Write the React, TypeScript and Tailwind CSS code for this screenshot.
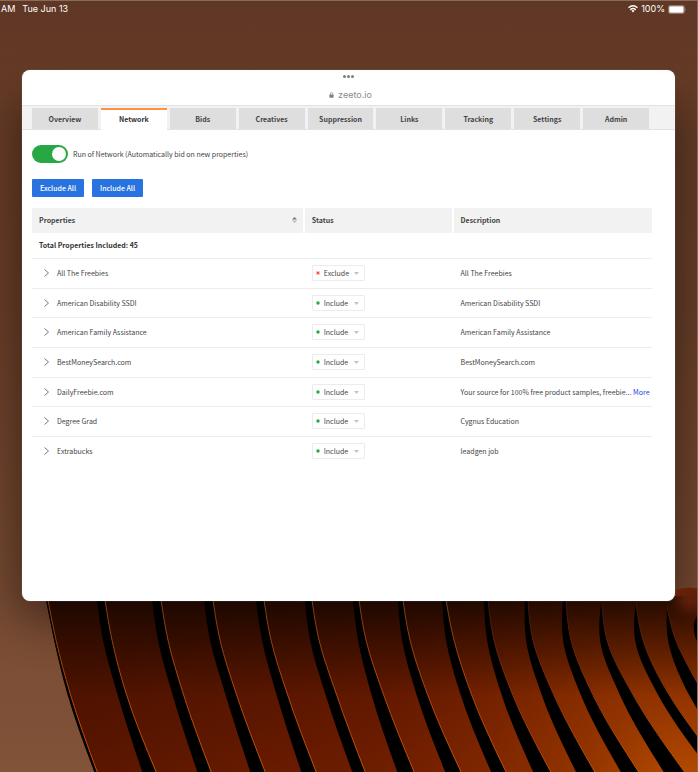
import { useState } from "react";

type Point = [number, number];
type Groove = { left: Point[]; right: Point[] };

const SANS = "font-['Noto_Sans_CJK_SC','Noto_Sans',sans-serif]";

const tabs = ["Overview", "Network", "Bids", "Creatives", "Suppression", "Links", "Tracking", "Settings", "Admin"];

const properties = [
  { name: "All The Freebies", status: "Exclude", description: "All The Freebies" },
  { name: "American Disability SSDI", status: "Include", description: "American Disability SSDI" },
  { name: "American Family Assistance", status: "Include", description: "American Family Assistance" },
  { name: "BestMoneySearch.com", status: "Include", description: "BestMoneySearch.com" },
  { name: "DailyFreebie.com", status: "Include", description: "Your source for 100% free product samples, freebie", more: true },
  { name: "Degree Grad", status: "Include", description: "Cygnus Education" },
  { name: "Extrabucks", status: "Include", description: "leadgen job" },
];

// Edges of the dark grooves between the wallpaper's ribs, top to bottom.
const grooves: Groove[] = [
  { left: [[46, 600], [54, 640], [67, 693], [95, 774]], right: [[48, 600], [56, 640], [70, 693], [98, 774]] },
  { left: [[97, 600], [103, 640], [117, 693], [143, 774]], right: [[105, 600], [112, 640], [126, 693], [157, 774]] },
  { left: [[152, 600], [158, 640], [172, 693], [198, 774]], right: [[161, 600], [168, 640], [183, 693], [212, 774]] },
  { left: [[204, 600], [210, 640], [225, 693], [251, 774]], right: [[213, 600], [220, 640], [236, 693], [266, 774]] },
  { left: [[256, 600], [262, 640], [276, 693], [302, 774]], right: [[264, 600], [271, 640], [287, 693], [317, 774]] },
  { left: [[305, 600], [310, 640], [325, 693], [353, 774]], right: [[312, 600], [319, 640], [336, 693], [366, 774]] },
  { left: [[353, 600], [358, 640], [371, 693], [398, 774]], right: [[359, 600], [366, 640], [383, 693], [415, 774]] },
  { left: [[398, 600], [402, 640], [416, 693], [446, 774]], right: [[403, 600], [410, 640], [427, 693], [462, 774]] },
  { left: [[442, 600], [446, 640], [460, 693], [492, 774]], right: [[446, 600], [454, 640], [471, 693], [507, 774]] },
  { left: [[484, 600], [487, 640], [501, 693], [534, 774]], right: [[488, 600], [494, 640], [512, 693], [552, 774]] },
  { left: [[525, 600], [526, 640], [541, 693], [577, 774]], right: [[528, 600], [533, 640], [553, 693], [596, 774]] },
  { left: [[563, 600], [563, 640], [580, 693], [622, 774]], right: [[566, 600], [571, 640], [592, 693], [640, 774]] },
  { left: [[601, 603], [600, 640], [619, 693], [665, 774]], right: [[602, 603], [607, 640], [632, 693], [686, 774]] },
  { left: [[636, 602], [635, 640], [657, 693], [702, 760]], right: [[636, 602], [643, 640], [668, 693], [702, 742]] },
  { left: [[667, 606], [668, 640], [683, 683], [702, 717]], right: [[667, 606], [675, 638], [686, 662], [702, 691]] },
  { left: [[699, 612], [694, 624], [695, 636], [702, 650]], right: [[699, 612], [698, 622], [699, 632], [702, 640]] },
];

// A smooth run of cubic curves through the points, with the slope at each
// inner point weighted by the lengths of the two segments that meet there.
function curve(points: Point[]) {
  const last = points.length - 1;
  const slope = (i: number) => (points[i + 1][0] - points[i][0]) / (points[i + 1][1] - points[i][1]);
  const inner = (i: number) => {
    const above = points[i][1] - points[i - 1][1];
    const below = points[i + 1][1] - points[i][1];
    return (slope(i - 1) * below + slope(i) * above) / (above + below);
  };
  const tangent = points.map((_, i) => {
    if (i === 0) return 1.5 * slope(0) - 0.5 * inner(1);
    if (i === last) return 1.5 * slope(last - 1) - 0.5 * inner(last - 1);
    return inner(i);
  });
  return points
    .slice(0, -1)
    .map(([x, y], i) => {
      const [nx, ny] = points[i + 1];
      const third = (ny - y) / 3;
      return `C${x + tangent[i] * third} ${y + third} ${nx - tangent[i + 1] * third} ${ny - third} ${nx} ${ny}`;
    })
    .join("");
}

function Wallpaper() {
  return (
    <svg className="absolute inset-0 h-full w-full" viewBox="0 0 698 772" preserveAspectRatio="xMidYMid slice" aria-hidden="true">
      <defs>
        <linearGradient id="wall" x1="0" y1="0" x2="0" y2="1">
          <stop offset="0" stopColor="#5f3725" />
          <stop offset="0.1" stopColor="#653b26" />
          <stop offset="0.4" stopColor="#683e28" />
          <stop offset="0.75" stopColor="#764a32" />
          <stop offset="1" stopColor="#815339" />
        </linearGradient>
        <linearGradient id="rib" gradientUnits="userSpaceOnUse" x1="230" y1="610" x2="330" y2="860">
          <stop offset="0" stopColor="#4a1200" />
          <stop offset="0.35" stopColor="#5a1600" />
          <stop offset="1" stopColor="#7a2200" />
        </linearGradient>
        <radialGradient id="glow" gradientUnits="userSpaceOnUse" cx="690" cy="810" r="330">
          <stop offset="0" stopColor="#c45400" />
          <stop offset="0.35" stopColor="#9a3a00" stopOpacity="0.75" />
          <stop offset="1" stopColor="#7a2200" stopOpacity="0" />
        </radialGradient>
        <linearGradient id="shade" x1="0" y1="0" x2="0" y2="1">
          <stop offset="0" stopColor="#0c0400" stopOpacity="0.8" />
          <stop offset="0.35" stopColor="#140500" stopOpacity="0.5" />
          <stop offset="1" stopColor="#200800" stopOpacity="0" />
        </linearGradient>
        <linearGradient id="edge" gradientUnits="userSpaceOnUse" x1="0" y1="600" x2="0" y2="772">
          <stop offset="0" stopColor="#7a3a12" />
          <stop offset="0.4" stopColor="#a8440c" />
          <stop offset="1" stopColor="#c85206" />
        </linearGradient>
        <linearGradient id="edgeRight" gradientUnits="userSpaceOnUse" x1="0" y1="600" x2="0" y2="772">
          <stop offset="0" stopColor="#3a1408" />
          <stop offset="0.3" stopColor="#6a2408" />
          <stop offset="1" stopColor="#c85206" />
        </linearGradient>
        <filter id="soft" x="-20%" y="-20%" width="140%" height="140%" colorInterpolationFilters="sRGB">
          <feGaussianBlur stdDeviation="22" />
        </filter>
        <filter id="grooveSoft" x="-20%" y="-20%" width="140%" height="140%" colorInterpolationFilters="sRGB">
          <feGaussianBlur stdDeviation="0.6" />
        </filter>
        <filter id="knobSoft" x="-60%" y="-60%" width="220%" height="220%" colorInterpolationFilters="sRGB">
          <feGaussianBlur stdDeviation="6" />
        </filter>
        <clipPath id="shell">
          <path d={`M46 590L46 600${curve(grooves[0].left)}L700 774V589Q688 586 676 590Z`} />
        </clipPath>
      </defs>
      <rect width="698" height="772" fill="url(#wall)" />
      <rect x="16" y="100" width="666" height="520" rx="20" fill="#24140c" fillOpacity="0.6" filter="url(#soft)" />
      <g clipPath="url(#shell)">
        <rect x="40" y="580" width="660" height="194" fill="url(#rib)" />
        <rect x="40" y="580" width="660" height="194" fill="url(#glow)" />
        <rect x="40" y="596" width="660" height="100" fill="url(#shade)" />
        <ellipse cx="692" cy="598" rx="16" ry="14" fill="#60200a" filter="url(#knobSoft)" />
        {grooves.map(({ left, right }) => (
          <g key={left[0][0]}>
            <path
              d={`M${right[0].join(" ")}${curve(right)}L${left[left.length - 1].join(" ")}${curve([...left].reverse())}Z`}
              fill="#000"
              filter="url(#grooveSoft)"
            />
            <path
              d={`M${right[0].join(" ")}${curve(right)}`}
              fill="none"
              stroke={left[0][0] > 480 ? "url(#edgeRight)" : "url(#edge)"}
            />
          </g>
        ))}
      </g>
      <path d="M0 .5H698" stroke="#8c6a5c" />
      <path d="M697.5 0V772" stroke="#8c6a5c" />
    </svg>
  );
}

function StatusBar() {
  return (
    <header className="flex h-[18px] items-center justify-between pr-3 pl-px font-[Inter,sans-serif] text-[9px] leading-[18px] text-white">
      <div className="flex gap-[7px]">
        <span>AM</span>
        <span>Tue Jun 13</span>
      </div>
      <div className="flex items-center gap-[3px]">
        <svg className="h-[8px] w-[10px]" viewBox="0 0 20 16" fill="none" stroke="#fff" strokeWidth="2.6" aria-label="Wi-Fi">
          <path d="M1 5.6Q10-2.6 19 5.6M4.4 9.4Q10 4.4 15.6 9.4" />
          <path d="M6.8 11.6Q10 8.8 13.2 11.6L10 15.2Z" fill="#fff" stroke="none" />
        </svg>
        <span>100%</span>
        <svg className="h-[9px] w-[18px]" viewBox="0 0 36 18" aria-label="Battery full">
          <rect x="0.8" y="0.8" width="32" height="16.4" rx="4" fill="none" stroke="#fff" strokeOpacity="0.5" strokeWidth="1.4" />
          <rect x="2.4" y="2.4" width="28.8" height="13.2" rx="2.6" fill="#fff" />
          <path d="M34.2 6.4Q36.4 9 34.2 11.6Z" fill="#fff" fillOpacity="0.5" />
        </svg>
      </div>
    </header>
  );
}

function StatusSelect({ label, initial }: { label: string; initial: string }) {
  const [status, setStatus] = useState(initial);
  const excluded = status === "Exclude";
  return (
    <div className="relative h-4 w-[53px]">
      <select
        aria-label={label}
        value={status}
        onChange={(event) => setStatus(event.target.value)}
        className="block h-4 w-full appearance-none rounded-[1px] border border-[#ececec] bg-white pl-[11px] text-[7px] leading-[14px] text-[#444]"
      >
        <option>Include</option>
        <option>Exclude</option>
      </select>
      <svg className="pointer-events-none absolute top-[6px] left-1 size-1" viewBox="0 0 4 4" aria-hidden="true">
        {excluded ? (
          <path d="M.6.6 3.4 3.4M3.4.6.6 3.4" stroke="#f0503c" strokeWidth="1.3" />
        ) : (
          <circle cx="2" cy="2" r="1.7" fill="#28a745" />
        )}
      </svg>
      <svg className="pointer-events-none absolute top-[7px] right-[6px] h-[3px] w-[5px]" viewBox="0 0 5 3" aria-hidden="true">
        <path d="M0 0H5L2.5 3Z" fill="#c4c4c4" />
      </svg>
    </div>
  );
}

function PropertiesTable() {
  const head = "border-white bg-[#f2f2f2] pb-px pl-[7px] text-left font-bold";
  const row = "h-[30px] last:h-[29px] nth-[3n]:h-[29px]";
  return (
    <table className="mt-[11px] w-full table-fixed border-separate border-spacing-0 text-[7px] leading-[10px] text-[#444]">
      <colgroup>
        <col className="w-[44%]" />
        <col className="w-[24%]" />
        <col className="w-[32%]" />
      </colgroup>
      <thead>
        <tr className="h-[25px]">
          <th scope="col" aria-sort="none" className={`${head} border-r-2`}>
            <div className="flex items-center justify-between pr-[6px]">
              <span>Properties</span>
              <button type="button" aria-label="Sort properties">
                <svg className="h-[6px] w-[5px]" viewBox="0 0 5 6" aria-hidden="true">
                  <path d="M0 2.5 2.5 0 5 2.5Z" fill="#777" />
                  <path d="M0 3.5H5L2.5 6Z" fill="#bbb" />
                </svg>
              </button>
            </div>
          </th>
          <th scope="col" className={`${head} border-r-2`}>Status</th>
          <th scope="col" className={head}>Description</th>
        </tr>
      </thead>
      <tbody className="[&_td]:border-b [&_td]:border-[#ececec] [&_td]:pb-px [&_tr:last-child_td]:border-b-0">
        <tr className="h-[26px]">
          <td colSpan={3} className="pl-[7px] font-bold text-[#333]">Total Properties Included: 45</td>
        </tr>
        {properties.map((property) => (
          <tr key={property.name} className={row}>
            <td>
              <div className="flex items-center gap-2 pl-3">
                <button type="button" aria-label={`Expand ${property.name}`}>
                  <svg className="h-2 w-[5px]" viewBox="0 0 5 8" fill="none" stroke="#777" aria-hidden="true">
                    <path d="M.5.5 4.5 4 .5 7.5" />
                  </svg>
                </button>
                <span>{property.name}</span>
              </div>
            </td>
            <td className="pl-[7px]">
              <StatusSelect label={`Status of ${property.name}`} initial={property.status} />
            </td>
            <td className="pl-[7px] whitespace-nowrap">
              {property.description}
              {property.more && (
                <a href="#more" className="text-[#1a3fe0]">... More</a>
              )}
            </td>
          </tr>
        ))}
      </tbody>
    </table>
  );
}

export default function App() {
  return (
    <div className="relative min-h-screen overflow-hidden bg-[#613823]">
      <Wallpaper />
      <div className="relative">
        <StatusBar />
        <main className={`${SANS} mt-[52px] mr-[23px] ml-[22px] overflow-hidden rounded-lg bg-white pb-[135px] text-[7px] text-[#444] shadow-[0_0_1px_#999]`}>
          <div className="flex flex-col items-center pt-1">
            <button type="button" aria-label="Window options" className="flex h-1 items-center gap-px">
              <span className="size-[3px] rounded-full bg-[#808080]" />
              <span className="size-[3px] rounded-full bg-[#808080]" />
              <span className="size-[3px] rounded-full bg-[#808080]" />
            </button>
            <div className="flex h-[27px] items-center gap-1 pt-[6px] pl-1 font-[Inter,sans-serif] text-[9px] leading-3 text-[#8a8a8a]">
              <svg className="h-[6px] w-[5px]" viewBox="0 0 10 12" aria-hidden="true">
                <path d="M2.5 6V3.5a2.5 2.5 0 0 1 5 0V6" fill="none" stroke="#8a8a8a" strokeWidth="1.4" />
                <rect x="0.8" y="5" width="8.4" height="6.6" rx="1.2" fill="#808080" />
              </svg>
              <span>zeeto.io</span>
            </div>
          </div>
          <nav className="flex h-[25px] gap-[3px] border-y border-[#e2e2e2] bg-[#f2f2f2] pt-[2px] pr-[26px] pl-[10px]">
            {tabs.map((tab) =>
              tab === "Network" ? (
                <a key={tab} href="#network" aria-current="page" className="-mb-px flex-1 border-t-2 border-[#ff9142] bg-white text-center leading-[19px] font-bold text-[#333]">
                  {tab}
                </a>
              ) : (
                <a key={tab} href={`#${tab.toLowerCase()}`} className="flex-1 bg-[#dedede] text-center leading-[23px] font-bold">
                  {tab}
                </a>
              ),
            )}
          </nav>
          <div className="pt-[15px] pr-[23px] pl-[10px]">
            <label className="flex items-center gap-[5px] leading-[18px]">
              <input
                type="checkbox"
                defaultChecked
                className="h-[18px] w-9 appearance-none rounded-full bg-[#ccc] p-[2px] before:block before:size-[14px] before:rounded-full before:bg-white checked:bg-[#28a745] checked:before:translate-x-[18px]"
              />
              <span>Run of Network (Automatically bid on new properties)</span>
            </label>
            <div className="mt-4 flex gap-2 font-medium text-white">
              <button type="button" className="h-[18px] rounded-[1px] bg-[#2873e0] px-2">Exclude All</button>
              <button type="button" className="h-[18px] rounded-[1px] bg-[#2873e0] px-2">Include All</button>
            </div>
            <PropertiesTable />
          </div>
        </main>
      </div>
    </div>
  );
}
